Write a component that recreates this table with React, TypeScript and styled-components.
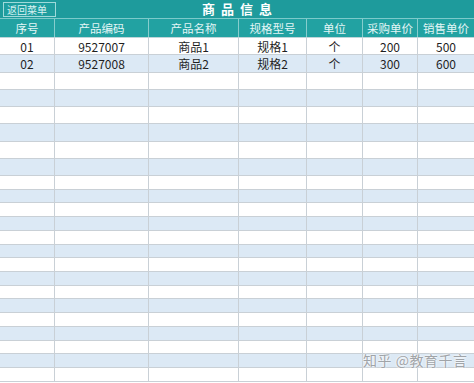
import React from "react";
import styled, { createGlobalStyle } from "styled-components";

const GlobalStyle = createGlobalStyle`
  html, body {
    margin: 0;
    padding: 0;
    background: #ffffff;
  }
  body {
    font-family: "Noto Sans CJK SC", "Noto Sans", sans-serif;
  }
`;

const columns = "54px 94px 90px 68px 56px 55px 57px";

const Sheet = styled.div`
  position: relative;
  width: 474px;
  height: 383px;
  overflow: hidden;
  background: #ffffff;
`;

const TitleBar = styled.div`
  height: 19px;
  background: #1e9b9c;
  border-bottom: 1px solid #7ccaca;
  box-sizing: border-box;
  display: grid;
  grid-template-columns: 1fr auto 1fr;
  align-items: center;
`;

const MenuButton = styled.button`
  justify-self: start;
  margin-left: 3px;
  width: 53px;
  height: 15px;
  padding: 0 0 0 3px;
  box-sizing: border-box;
  border: 1px solid #9fdada;
  background: #209e9f;
  color: #d8f2f2;
  font-family: "Noto Sans CJK SC", sans-serif;
  font-size: 10px;
  line-height: 13px;
  text-align: left;
  cursor: pointer;
`;

const Title = styled.div`
  color: #ffffff;
  font-size: 13px;
  font-weight: 700;
  letter-spacing: 6px;
  margin-right: -6px;
  line-height: 18px;
`;

const Row = styled.div<{ $height: number; $shade?: boolean }>`
  display: grid;
  grid-template-columns: ${columns};
  height: ${(p) => p.$height}px;
  box-sizing: border-box;
  border-bottom: 1px solid #c9d0d6;
  background: ${(p) => (p.$shade ? "#dce9f5" : "#ffffff")};
`;

const HeaderRow = styled.div`
  display: grid;
  grid-template-columns: ${columns};
  height: 19px;
  background: #22a2a2;
  border-bottom: 1px solid #bfd6d9;
  box-sizing: border-box;
`;

const HeaderCell = styled.div`
  display: flex;
  align-items: center;
  justify-content: center;
  color: #e2f6f6;
  font-size: 11.5px;
  border-left: 1px solid #86cdcd;
  &:first-child {
    border-left: none;
  }
`;

const Cell = styled.div`
  display: flex;
  align-items: center;
  justify-content: center;
  color: #1f1f1f;
  font-size: 12px;
  border-left: 1px solid #c9d0d6;
  &:first-child {
    border-left: none;
  }
`;

const Watermark = styled.div`
  position: absolute;
  left: 363px;
  top: 350px;
  font-size: 14px;
  letter-spacing: 0.5px;
  color: #a0a4a8;
  text-shadow: 0 0 2px #ffffff, 0 0 2px #ffffff;
  white-space: nowrap;
`;

const headers = ["序号", "产品编码", "产品名称", "规格型号", "单位", "采购单价", "销售单价"];

const products = [
  ["01", "9527007", "商品1", "规格1", "个", "200", "500"],
  ["02", "9527008", "商品2", "规格2", "个", "300", "600"],
];

// first 8 rows are taller than the rest
const rowHeights = [
  ...Array(8).fill(17.25),
  ...Array(15).fill(13.73),
];

const App: React.FC = () => {
  return (
    <Sheet>
      <GlobalStyle />
      <TitleBar>
        <MenuButton>返回菜单</MenuButton>
        <Title>商品信息</Title>
        <span />
      </TitleBar>
      <HeaderRow>
        {headers.map((h) => (
          <HeaderCell key={h}>{h}</HeaderCell>
        ))}
      </HeaderRow>
      {rowHeights.map((h, i) => (
        <Row key={i} $height={h} $shade={i % 2 === 1}>
          {headers.map((_, c) => (
            <Cell key={c}>{products[i] ? products[i][c] : ""}</Cell>
          ))}
        </Row>
      ))}
      <Watermark>知乎 @教育千言</Watermark>
    </Sheet>
  );
};

export default App;
